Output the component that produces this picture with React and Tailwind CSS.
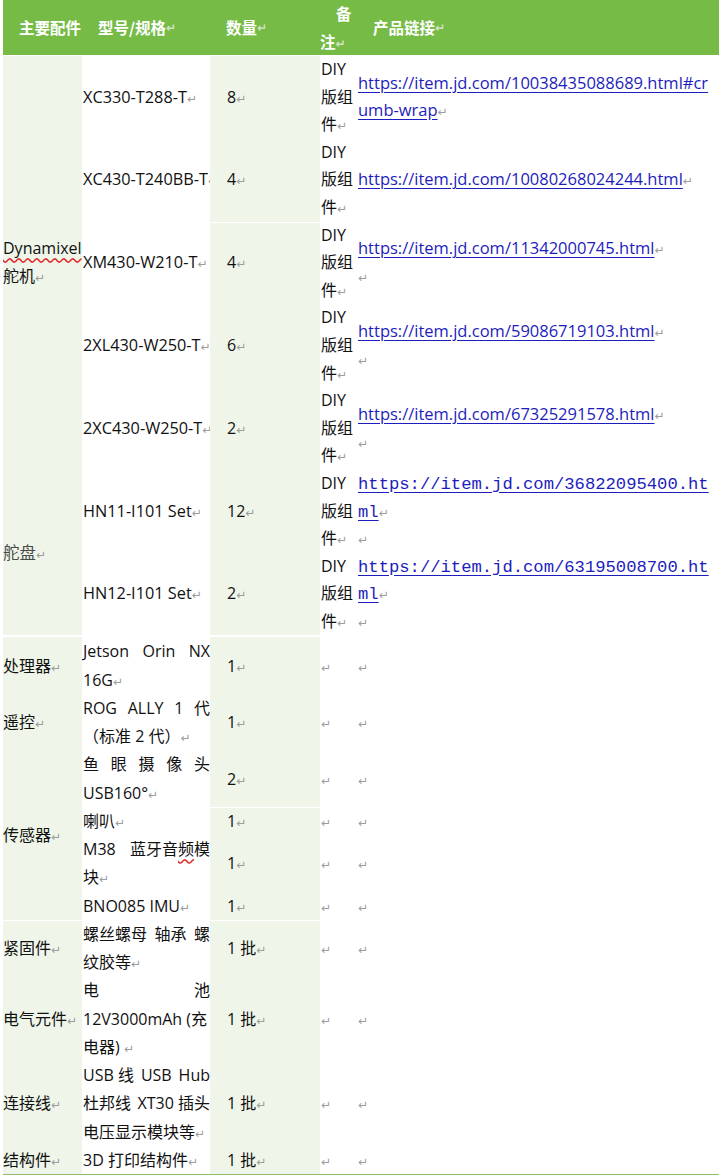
import React from 'react';

const GREEN = 'bg-[#eff6e9]';

const Mark = ({ onGreen }) => (
  <span
    className={
      onGreen
        ? "font-['DejaVu_Sans'] text-[12px] leading-none text-[#cfe3c0]"
        : "font-['DejaVu_Sans'] text-[12px] leading-none text-[#9c9c9c]"
    }
  >
    ↵
  </span>
);

const Spread = ({ parts }) => (
  <div className="flex justify-between whitespace-nowrap">
    {parts.map((p, i) => (
      <span key={i}>{p}</span>
    ))}
  </div>
);

const Cell = ({ green, sep, className = '', children }) => (
  <div
    className={`flex flex-col justify-center overflow-hidden ${green ? GREEN : 'bg-white'} ${
      sep ? 'shadow-[inset_0_1px_0_#ffffff]' : ''
    } ${className}`}
  >
    {children}
  </div>
);

const servos = [
  { model: 'XC330-T288-T', qty: '8', link: ['https://item.jd.com/10038435088689.html#cr', 'umb-wrap'] },
  { model: 'XC430-T240BB-T', qty: '4', link: ['https://item.jd.com/10080268024244.html'] },
  { model: 'XM430-W210-T', qty: '4', link: ['https://item.jd.com/11342000745.html'], blank: true, sep: true },
  { model: '2XL430-W250-T', qty: '6', link: ['https://item.jd.com/59086719103.html'], blank: true },
  { model: '2XC430-W250-T', qty: '2', link: ['https://item.jd.com/67325291578.html'], blank: true },
  { model: 'HN11-I101 Set', qty: '12', link: ['https://item.jd.com/36822095400.ht', 'ml'], blank: true, mono: true },
  { model: 'HN12-I101 Set', qty: '2', link: ['https://item.jd.com/63195008700.ht', 'ml'], blank: true, mono: true },
];

const LinkLines = ({ item }) => (
  <>
    {item.link.map((line, i) => (
      <div key={i} className="whitespace-nowrap">
        <a
          className={
            item.mono
              ? "font-['Liberation_Mono',monospace] text-[17.2px] leading-none text-[#1d1dbd] underline underline-offset-[3px]"
              : 'text-[16.5px] leading-none text-[#1d1dbd] underline underline-offset-[3px]'
          }
        >
          {line}
        </a>
        {i === item.link.length - 1 && <Mark />}
      </div>
    ))}
    {item.blank && (
      <div>
        <Mark />
      </div>
    )}
  </>
);

const lower = [
  {
    part: '处理器',
    span: 1,
    model: [<Spread key="a" parts={['Jetson', 'Orin', 'NX']} />, <div key="b">16G<Mark /></div>],
    qty: '1',
  },
  {
    part: '遥控',
    span: 1,
    model: [<Spread key="a" parts={['ROG', 'ALLY', '1', '代']} />, <div key="b">（标准 2 代）<Mark /></div>],
    qty: '1',
  },
  {
    part: '传感器',
    span: 4,
    model: [<Spread key="a" parts={['鱼', '眼', '摄', '像', '头']} />, <div key="b">USB160°<Mark /></div>],
    qty: '2',
  },
  { model: [<div key="a">喇叭<Mark /></div>], qty: '1', sep: true },
  {
    model: [
      <Spread
        key="a"
        parts={[
          'M38',
          <>
            蓝牙音
            <span className="underline decoration-wavy decoration-[#e03030] underline-offset-[3px]">频</span>模
          </>,
        ]}
      />,
      <div key="b">块<Mark /></div>,
    ],
    qty: '1',
  },
  { model: [<div key="a">BNO085 IMU<Mark /></div>], qty: '1' },
  {
    part: '紧固件',
    span: 1,
    sep: true,
    model: [<Spread key="a" parts={['螺丝螺母', '轴承', '螺']} />, <div key="b">纹胶等<Mark /></div>],
    qty: '1 批',
  },
  {
    part: '电气元件',
    span: 1,
    model: [
      <Spread key="a" parts={['电', '池']} />,
      <div key="b">12V3000mAh (充</div>,
      <div key="c">电器) <Mark /></div>,
    ],
    qty: '1 批',
  },
  {
    part: '连接线',
    span: 1,
    model: [
      <Spread key="a" parts={['USB 线', 'USB', 'Hub']} />,
      <Spread key="b" parts={['杜邦线', 'XT30 插头']} />,
      <div key="c">电压显示模块等<Mark /></div>,
    ],
    qty: '1 批',
  },
  { part: '结构件', span: 1, model: [<div key="a">3D 打印结构件<Mark /></div>], qty: '1 批' },
];

const spanClass = { 1: 'row-span-1', 2: 'row-span-2', 4: 'row-span-4', 5: 'row-span-5' };

const App = () => {
  return (
    <div className="min-h-[1176px] bg-white">
      <div className="ml-[3px] w-[716px] font-['Open_Sans','Noto_Sans_CJK_SC',sans-serif] text-[16px] text-[#111]">
        {/* header */}
        <div className="flex h-[55px] bg-[#76bb46] font-['Noto_Sans_CJK_SC',sans-serif] text-[15.5px] font-bold leading-[27.5px] text-white">
          <div className="flex w-[79px] items-center pl-4">主要配件</div>
          <div className="flex w-[128px] items-center pl-4">
            型号/规格<Mark onGreen />
          </div>
          <div className="flex w-[110px] items-center pl-4">
            数量<Mark onGreen />
          </div>
          <div className="flex w-[37px] flex-col justify-center">
            <div className="pl-4">备</div>
            <div>
              注<Mark onGreen />
            </div>
          </div>
          <div className="flex w-[362px] items-center pl-4">
            产品链接<Mark onGreen />
          </div>
        </div>

        {/* servo rows */}
        <div className="mt-[1px] grid grid-cols-[79px_128px_110px_37px_362px] leading-[27.6px]">
          {servos.map((s, i) => (
            <React.Fragment key={s.model}>
              {i === 0 && (
                <Cell green className="row-span-5">
                  <div className="whitespace-nowrap">
                    <span className="underline decoration-wavy decoration-[#e03030] underline-offset-[3px]">
                      Dynamixel
                    </span>
                  </div>
                  <div>
                    舵机<Mark />
                  </div>
                </Cell>
              )}
              {i === 5 && (
                <Cell green className="row-span-2">
                  <div className="font-['Noto_Sans_CJK_SC',sans-serif] text-[16.5px] text-[#4a4a4a]">
                    舵盘<Mark />
                  </div>
                </Cell>
              )}
              <Cell sep={s.sep} className="pl-px">
                <div className="whitespace-nowrap text-[16.3px]">
                  {s.model}
                  <Mark />
                </div>
              </Cell>
              <Cell green sep={s.sep} className="pl-[17px]">
                <div>
                  {s.qty}
                  <Mark />
                </div>
              </Cell>
              <Cell sep={s.sep} className="pl-px">
                <div>DIY</div>
                <div className="whitespace-nowrap">版组</div>
                <div>
                  件<Mark />
                </div>
              </Cell>
              <Cell sep={s.sep} className="pl-px">
                <LinkLines item={s} />
              </Cell>
            </React.Fragment>
          ))}
        </div>

        {/* other parts */}
        <div className="mt-[2px] grid grid-cols-[79px_128px_110px_37px_362px] leading-[28.25px]">
          {lower.map((r, i) => (
            <React.Fragment key={i}>
              {r.part && (
                <Cell green sep={r.sep} className={spanClass[r.span]}>
                  <div className="whitespace-nowrap">
                    {r.part}
                    <Mark />
                  </div>
                </Cell>
              )}
              <Cell sep={r.sep} className="pl-px">
                {r.model}
              </Cell>
              <Cell green sep={r.sep} className="pl-[17px]">
                <div>
                  {r.qty}
                  <Mark />
                </div>
              </Cell>
              <Cell sep={r.sep} className="pl-px">
                <div>
                  <Mark />
                </div>
              </Cell>
              <Cell sep={r.sep} className="pl-px">
                <div>
                  <Mark />
                </div>
              </Cell>
            </React.Fragment>
          ))}
        </div>
        <div className="h-px bg-[#8dbf6c]" />
      </div>
    </div>
  );
};

export default App;
